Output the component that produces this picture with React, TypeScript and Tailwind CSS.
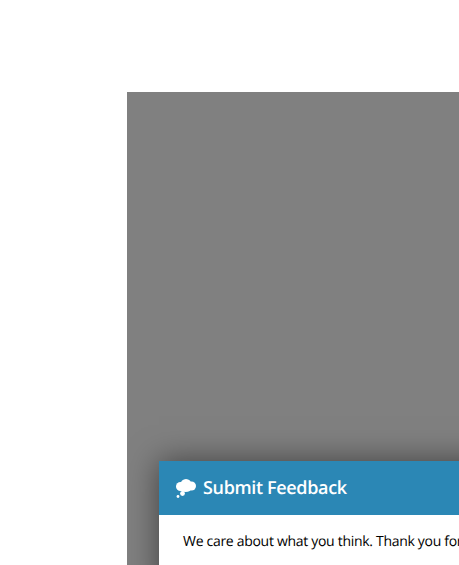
export default function App() {
  return (
    <div className="h-[565px] w-[459px] overflow-hidden bg-white pl-[127px] pt-[92px] font-['Open_Sans',sans-serif] [text-rendering:geometricPrecision]">
      <div className="h-[473px] w-[332px] overflow-hidden bg-[#808080] pl-[32px] pt-[369px]">
        <div className="w-[600px] bg-white shadow-[0_0_30px_rgba(0,0,0,0.5)]">
          <div className="flex h-[54px] items-center gap-[6px] bg-[#2b87b5] pl-[16px] text-white">
            <svg width="22" height="20" viewBox="0 0 22 20" fill="currentColor" aria-hidden="true">
              <ellipse cx="5.5" cy="8.5" rx="4.5" ry="4.5" />
              <ellipse cx="11" cy="6.5" rx="5.5" ry="5.5" />
              <ellipse cx="16.5" cy="8" rx="4.5" ry="4.5" />
              <ellipse cx="10.5" cy="10.5" rx="6" ry="3.5" />
              <circle cx="7.5" cy="15.5" r="2.4" />
              <circle cx="3" cy="18.5" r="1.4" />
            </svg>
            <h1 className="-mt-[1px] text-[18px] font-semibold leading-none tracking-[-0.35px]">Submit Feedback</h1>
          </div>
          <p className="whitespace-nowrap pl-[24px] pt-[17px] text-[14px] leading-[20px] tracking-[-0.3px] text-black">
            We care about what you think. Thank you for your feedback.
          </p>
          <div className="h-[40px]" />
        </div>
      </div>
    </div>
  )
}
